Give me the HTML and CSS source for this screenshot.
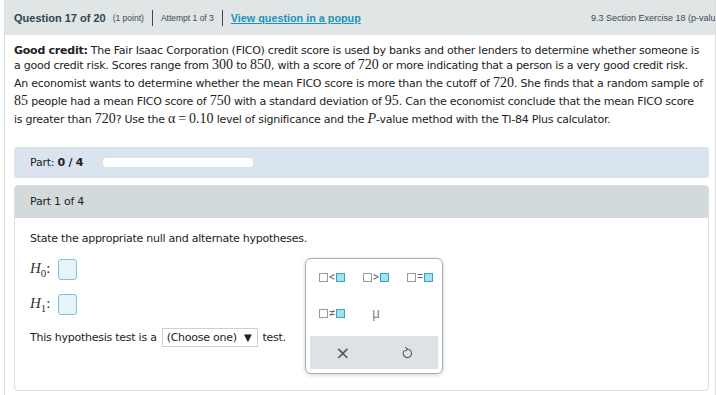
FILE: index.html
```html
<!DOCTYPE html>
<html>
<head>
    <title>Question 17 of 20</title>
    <link rel="stylesheet" href="styles.css">
</head>
<body>
<div class="page">

    <div class="qheader">
        <span class="qtitle">Question 17 of 20</span>
        <span class="qsmall">(1 point)</span>
        <span class="sep"></span>
        <span class="qsmall">Attempt 1 of 3</span>
        <span class="sep"></span>
        <a class="popup-link" href="#">View question in a popup</a>
        <span class="qsection">9.3 Section Exercise 18 (p-value method TI-84)</span>
    </div>

    <div class="problem">
        <p><b>Good credit:</b> The Fair Isaac Corporation (FICO) credit score is used by banks and other lenders to determine whether someone is<br>
        a good credit risk. Scores range from <span class="m">300</span> to <span class="m">850</span>, with a score of <span class="m">720</span> or more indicating that a person is a very good credit risk.<br>
        An economist wants to determine whether the mean FICO score is more than the cutoff of <span class="m">720</span>. She finds that a random sample of<br>
        <span class="m">85</span> people had a mean FICO score of <span class="m">750</span> with a standard deviation of <span class="m">95</span>. Can the economist conclude that the mean FICO score<br>
        is greater than <span class="m">720</span>? Use the <span class="m">&alpha;&thinsp;=&thinsp;0.10</span> level of significance and the <span class="m"><i>P</i></span>-value method with the TI-84 Plus calculator.</p>
    </div>

    <div class="partbar">
        <span>Part: <b>0 / 4</b></span>
        <div class="progress"></div>
    </div>

    <div class="partpanel">
        <div class="parthead">Part 1 of 4</div>
        <div class="partbody">
            <p class="instr">State the appropriate null and alternate hypotheses.</p>
            <div class="hyp">
                <span class="hlabel"><i>H</i><sub>0</sub>:</span>
                <span class="answerbox"></span>
            </div>
            <div class="hyp">
                <span class="hlabel"><i>H</i><sub>1</sub>:</span>
                <span class="answerbox"></span>
            </div>
            <div class="testline">
                This hypothesis test is a
                <span class="choose">(Choose one) <span class="arrow">&#9660;</span></span>
                test.
            </div>
        </div>
    </div>

    <!-- floating symbol palette -->
    <div class="palette">
        <div class="symrow">
            <span class="sym"><span class="sq"></span>&lt;<span class="sq filled"></span></span>
            <span class="sym"><span class="sq"></span>&gt;<span class="sq filled"></span></span>
            <span class="sym"><span class="sq"></span>=<span class="sq filled"></span></span>
        </div>
        <div class="symrow second">
            <span class="sym"><span class="sq"></span>&ne;<span class="sq filled"></span></span>
            <span class="sym mu">&mu;</span>
            <span class="sym"></span>
        </div>
        <div class="palbottom">
            <span class="palbtn">&times;</span>
            <span class="palbtn">
                <svg width="12" height="13" viewBox="0 0 12 13">
                    <path d="M3.4 4.4 A4.2 4.2 0 1 0 6.2 3.2" fill="none" stroke="#555" stroke-width="1.1"/>
                    <path d="M4.4 1.2 L6.6 3.2 L4.4 5.2" fill="none" stroke="#555" stroke-width="1.1"/>
                </svg>
            </span>
        </div>
    </div>

</div>
</body>
</html>
```

FILE: styles.css
```css
body {
    margin: 0;
    background-color: white;
    font-family: "DejaVu Sans", Verdana, sans-serif;
    letter-spacing: -0.25px;
    color: #222;
}

.page {
    position: relative;
    margin-left: 4px;
    width: 710px;
    height: 395px;
    border-left: 1px solid #dcdcdc;
    border-right: 1px solid #dcdcdc;
    overflow: hidden;
}

.qheader {
    display: flex;
    align-items: center;
    height: 35px;
    padding-left: 9px;
    background-color: #e0e5e6;
    font-family: "Liberation Sans", Arial, sans-serif;
    letter-spacing: 0;
    white-space: nowrap;
}

.qtitle {
    font-size: 11px;
    font-weight: bold;
    color: #2e4450;
    margin-right: 7px;
}

.qsmall {
    font-size: 8.5px;
    color: #3a4a52;
}

.sep {
    width: 1px;
    height: 16px;
    background-color: #3a4a52;
    margin: 0 8px;
}

.popup-link {
    font-size: 10.8px;
    font-weight: bold;
    color: #1d93bb;
    text-decoration: underline;
}

.qsection {
    flex-shrink: 0;
    width: 200px;
    margin-left: auto;
    margin-right: -76px;
    font-size: 9px;
    color: #3a4a52;
}

.problem {
    padding: 9px 4px 0 9px;
    height: 103px;
}

.problem p {
    margin: 0;
    font-size: 11px;
    line-height: 14px;
    white-space: nowrap;
    color: #222;
}

.m {
    display: inline-block;
    padding-bottom: 4px;
    font-family: "Liberation Serif", "Times New Roman", serif;
    font-size: 14px;
    line-height: 14px;
    letter-spacing: 0;
}

.partbar {
    display: flex;
    align-items: center;
    gap: 20px;
    margin: 0 6px 0 9px;
    height: 31px;
    padding-left: 16px;
    background-color: #d9e4ee;
    border-radius: 3px;
    font-size: 11px;
}

.progress {
    width: 150px;
    height: 9px;
    background-color: white;
    border-radius: 3px;
}

.partpanel {
    margin: 7px 6px 0 9px;
    border: 1px solid #dcdfe0;
    border-radius: 4px;
    height: 204px;
}

.parthead {
    height: 32px;
    line-height: 32px;
    padding-left: 15px;
    background-color: #d3dadb;
    font-size: 11px;
}

.partbody {
    padding: 14px 15px 0 15px;
    font-size: 11px;
}

.instr {
    margin: 0 0 13px 0;
}

.hyp {
    display: flex;
    align-items: center;
    gap: 5px;
    height: 22px;
    margin-bottom: 13px;
}

.hlabel {
    width: 23px;
    font-family: "Liberation Serif", "Times New Roman", serif;
    font-size: 15px;
    letter-spacing: 0;
    color: #333;
}

.hlabel sub {
    font-size: 11px;
}

.answerbox {
    width: 17px;
    height: 19px;
    border: 1px solid #7cc4d8;
    border-radius: 3px;
    background-color: #e6f3f7;
}

.testline {
    display: flex;
    align-items: center;
    gap: 5px;
    margin-top: 3px;
}

.choose {
    display: inline-block;
    height: 17px;
    line-height: 18px;
    padding: 0 5px 0 4px;
    border: 1px solid #cfcfcf;
    font-size: 11px;
}

.arrow {
    font-size: 10px;
    margin-left: 4px;
}

.palette {
    position: absolute;
    left: 300px;
    top: 258px;
    width: 138px;
    height: 116px;
    padding: 4px;
    box-sizing: border-box;
    border: 1px solid #a9aeb0;
    border-radius: 6px;
    background-color: white;
    box-shadow: 0 1px 4px rgba(0, 0, 0, 0.18);
    display: flex;
    flex-direction: column;
}

.symrow {
    display: grid;
    grid-template-columns: 44px 44px 44px;
    height: 28px;
    align-items: center;
}

.symrow.second {
    height: 44px;
}

.sym {
    display: flex;
    align-items: center;
    justify-content: center;
    gap: 1px;
    font-family: "Roboto", sans-serif;
    font-size: 12px;
    letter-spacing: 0;
    color: #666;
}

.mu {
    font-size: 14px;
    color: #888;
}

.sq {
    display: inline-block;
    width: 7px;
    height: 7px;
    border: 1px solid #999;
}

.sq.filled {
    border-color: #2aa6c6;
    background-color: #a9deec;
}

.palbottom {
    margin-top: auto;
    height: 33px;
    background-color: #dde3e5;
    display: flex;
    align-items: center;
    justify-content: space-around;
}

.palbtn {
    font-size: 18px;
    color: #555;
    display: flex;
    align-items: center;
}
```
